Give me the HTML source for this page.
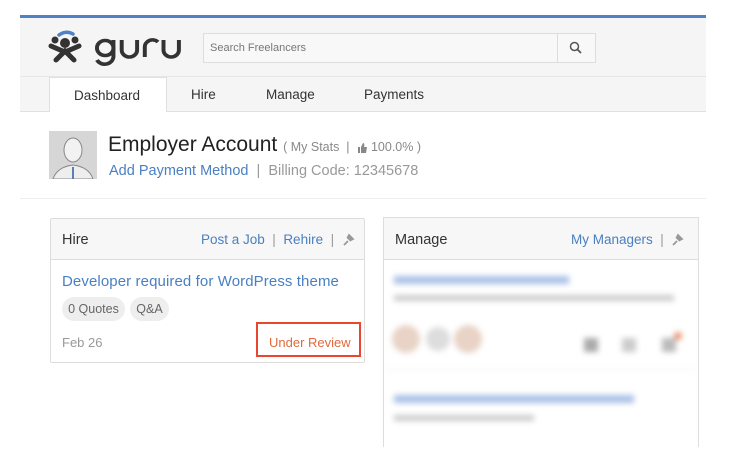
<!DOCTYPE html>
<html><head><style>
*{margin:0;padding:0;box-sizing:border-box}
body{width:730px;height:472px;background:#fff;font-family:"Liberation Sans",sans-serif;position:relative;overflow:hidden}
.a{position:absolute}
.blue{color:#4a7fc1}
.pin{display:inline-block;vertical-align:-2px}
</style></head><body>
<div class="a" style="left:20px;top:15px;width:686px;height:3px;background:#4f81c7"></div>
<div class="a" style="left:20px;top:18px;width:686px;height:94px;background:#f5f5f5"></div>
<div class="a" style="left:20px;top:76px;width:686px;height:1px;background:#e6e6e6"></div>
<div class="a" style="left:20px;top:111px;width:686px;height:1px;background:#e0e0e0"></div>
<!-- logo -->
<svg class="a" style="left:48px;top:28px" width="140" height="40" viewBox="0 0 140 40">
<path d="M11 7 Q18 2 25 6" stroke="#4f81c7" stroke-width="3.5" fill="none" stroke-linecap="round"/>
<circle cx="7" cy="12" r="3.5" fill="#333"/><circle cx="27" cy="12" r="3.5" fill="#333"/>
<circle cx="17" cy="15" r="5" fill="#333"/>
<path d="M3 18 L17 24 L31 18 M8 32 L17 23 L26 32" stroke="#333" stroke-width="5" fill="none" stroke-linecap="round"/>
<g transform="translate(44,0) scale(1.1,1)">
<circle cx="12" cy="20" r="7.5" stroke="#333" stroke-width="3.6" fill="none"/>
<path d="M19.5 12 v17 a8 8 0 0 1 -15 3" stroke="#333" stroke-width="3.6" fill="none"/>
<path d="M27 12 v10 a7 7 0 0 0 14 0 v-10" stroke="#333" stroke-width="3.6" fill="none"/>
<path d="M48 29 v-10 a7 7 0 0 1 12 -5" stroke="#333" stroke-width="3.6" fill="none"/>
<path d="M65 12 v10 a7 7 0 0 0 14 0 v-10" stroke="#333" stroke-width="3.6" fill="none"/>
</g>
</svg>
<div class="a" style="left:203px;top:33px;width:393px;height:30px;background:#f8f8f8;border:1px solid #ddd"></div>
<div class="a" style="left:557px;top:33px;width:1px;height:30px;background:#ddd"></div>
<div class="a" style="left:210px;top:42px;font-size:11px;color:#777">Search Freelancers</div>
<svg class="a" style="left:569px;top:41px" width="14" height="14"><circle cx="5.5" cy="5.5" r="4" stroke="#555" stroke-width="1.5" fill="none"/><path d="M8.5 8.5L12 12" stroke="#555" stroke-width="1.8"/></svg>
<div class="a" style="left:49px;top:77px;width:118px;height:35px;background:#fff;border:1px solid #e0e0e0;border-bottom:none"></div>
<div class="a" style="left:74px;top:88px;font-size:13.5px;color:#333">Dashboard</div>
<div class="a" style="left:191px;top:87px;font-size:13.5px;color:#333">Hire</div>
<div class="a" style="left:266px;top:87px;font-size:13.5px;color:#333">Manage</div>
<div class="a" style="left:364px;top:87px;font-size:13.5px;color:#333">Payments</div>
<!-- avatar -->
<svg class="a" style="left:49px;top:131px" width="48" height="48"><rect width="48" height="48" fill="#d6d6d6"/><ellipse cx="24" cy="19" rx="9" ry="12" fill="#f2f2f2" stroke="#888"/><path d="M4 48 Q8 36 24 34 Q40 36 44 48Z" fill="#eee" stroke="#888"/><path d="M24 36 L24 48" stroke="#5a7fb0" stroke-width="2"/></svg>
<div class="a" style="left:108px;top:133px;font-size:21px;color:#222">Employer Account <span style="font-size:12.5px;color:#888">( My Stats &nbsp;| &nbsp;<svg class="pin" width="11" height="11"><path d="M1 5h2v6H1z M4 5 L6 1 Q8 1 7 5 H10 L9 11 H4Z" fill="#888"/></svg> 100.0% )</span></div>
<div class="a" style="left:109px;top:163px;font-size:14.5px;color:#999"><span class="blue">Add Payment Method</span> &nbsp;| &nbsp;Billing Code: 12345678</div>
<div class="a" style="left:20px;top:198px;width:686px;height:1px;background:#eee"></div>
<!-- hire card -->
<div class="a" style="left:50px;top:218px;width:315px;height:145px;border:1px solid #ddd;border-radius:2px"></div>
<div class="a" style="left:51px;top:219px;width:313px;height:41px;background:#f7f7f7;border-bottom:1px solid #ddd"></div>
<div class="a" style="left:62px;top:232px;font-size:14.5px;color:#333">Hire</div>
<div class="a" style="left:201px;top:232px;font-size:13.5px;color:#999"><span class="blue">Post a Job</span> &nbsp;| &nbsp;<span class="blue">Rehire</span> &nbsp;| &nbsp;<svg class="pin" width="13" height="13"><path d="M2 12 L6 8 M5 4 L9 8 M7 2 L11 6 L9 7 L6 4Z" stroke="#999" stroke-width="1.8" fill="#999"/></svg></div>
<div class="a" style="left:62px;top:273px;font-size:15px;color:#4a7fc1;letter-spacing:0.1px">Developer required for WordPress theme</div>
<div class="a" style="left:62px;top:297px;width:63px;height:24px;border-radius:12px;background:#eee;font-size:12.5px;color:#666;text-align:center;line-height:24px">0 Quotes</div>
<div class="a" style="left:130px;top:297px;width:39px;height:24px;border-radius:12px;background:#eee;font-size:12.5px;color:#666;text-align:center;line-height:24px">Q&amp;A</div>
<div class="a" style="left:62px;top:335px;font-size:13px;color:#999">Feb 26</div>
<div class="a" style="left:256px;top:322px;width:105px;height:35px;border:2px solid #e8462f"></div>
<div class="a" style="left:269px;top:335px;font-size:13px;color:#e06a3e">Under Review</div>
<!-- manage card -->
<div class="a" style="left:383px;top:217px;width:316px;height:230px;border:1px solid #ddd;border-bottom:none"></div>
<div class="a" style="left:384px;top:218px;width:314px;height:42px;background:#f7f7f7;border-bottom:1px solid #ddd"></div>
<div class="a" style="left:395px;top:232px;font-size:14.5px;color:#333">Manage</div>
<div class="a" style="left:571px;top:232px;font-size:13.5px;color:#999"><span class="blue">My Managers</span> &nbsp;| &nbsp;<svg class="pin" width="13" height="13"><path d="M2 12 L6 8 M5 4 L9 8 M7 2 L11 6 L9 7 L6 4Z" stroke="#999" stroke-width="1.8" fill="#999"/></svg></div>
<div class="a" style="left:384px;top:262px;width:314px;height:180px;filter:blur(3px)">
<div class="a" style="left:10px;top:14px;width:175px;height:8px;background:#a9c1e6"></div>
<div class="a" style="left:10px;top:33px;width:280px;height:6px;background:#ccc"></div>
<div class="a" style="left:8px;top:63px;width:28px;height:28px;border-radius:50%;background:#e8d3c6"></div>
<div class="a" style="left:42px;top:65px;width:24px;height:24px;border-radius:50%;background:#ddd"></div>
<div class="a" style="left:70px;top:63px;width:28px;height:28px;border-radius:50%;background:#e8d3c6"></div>
<div class="a" style="left:200px;top:76px;width:14px;height:14px;background:#aaa"></div>
<div class="a" style="left:238px;top:76px;width:14px;height:14px;background:#ccc"></div>
<div class="a" style="left:278px;top:76px;width:14px;height:14px;background:#bbb"></div>
<div class="a" style="left:290px;top:70px;width:8px;height:8px;border-radius:50%;background:#e8906a"></div>
<div class="a" style="left:0;top:106px;width:314px;height:1px;background:#eee"></div>
<div class="a" style="left:10px;top:133px;width:240px;height:8px;background:#a9c1e6"></div>
<div class="a" style="left:10px;top:153px;width:140px;height:6px;background:#ccc"></div>
</div>
</body></html>
